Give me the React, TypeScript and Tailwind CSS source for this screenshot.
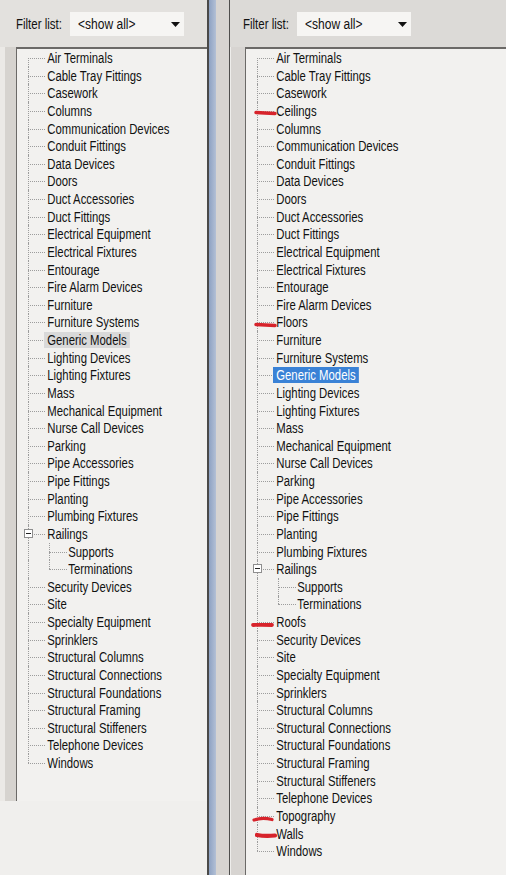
import React from "react";

type Item = { label: string; children?: string[] };

type Mark = { cls: string; d: string; w: number };

const leftItems: Item[] = [
  { label: "Air Terminals" },
  { label: "Cable Tray Fittings" },
  { label: "Casework" },
  { label: "Columns" },
  { label: "Communication Devices" },
  { label: "Conduit Fittings" },
  { label: "Data Devices" },
  { label: "Doors" },
  { label: "Duct Accessories" },
  { label: "Duct Fittings" },
  { label: "Electrical Equipment" },
  { label: "Electrical Fixtures" },
  { label: "Entourage" },
  { label: "Fire Alarm Devices" },
  { label: "Furniture" },
  { label: "Furniture Systems" },
  { label: "Generic Models" },
  { label: "Lighting Devices" },
  { label: "Lighting Fixtures" },
  { label: "Mass" },
  { label: "Mechanical Equipment" },
  { label: "Nurse Call Devices" },
  { label: "Parking" },
  { label: "Pipe Accessories" },
  { label: "Pipe Fittings" },
  { label: "Planting" },
  { label: "Plumbing Fixtures" },
  { label: "Railings", children: ["Supports", "Terminations"] },
  { label: "Security Devices" },
  { label: "Site" },
  { label: "Specialty Equipment" },
  { label: "Sprinklers" },
  { label: "Structural Columns" },
  { label: "Structural Connections" },
  { label: "Structural Foundations" },
  { label: "Structural Framing" },
  { label: "Structural Stiffeners" },
  { label: "Telephone Devices" },
  { label: "Windows" },
];

// right list = left list plus the categories that were added
const added: Record<string, string> = {
  Ceilings: "Columns",
  Floors: "Furniture",
  Roofs: "Security Devices",
  Topography: "Windows",
  Walls: "Windows",
};

const rightItems: Item[] = [];
leftItems.forEach((it) => {
  Object.keys(added).forEach((k) => {
    if (added[k] === it.label) rightItems.push({ label: k });
  });
  rightItems.push(it);
});

// red pen strokes drawn on the screenshot
const marks: Record<string, Mark> = {
  Ceilings: { cls: "left-[8px] top-[7px]", d: "M2 3.5 Q10 4 21 4.5", w: 3.5 },
  Floors: { cls: "left-[8px] top-[7px]", d: "M2 3.5 Q11 4 21 4.5", w: 3.5 },
  Roofs: { cls: "left-[5px] top-[8px]", d: "M2 4 Q10 3.6 21 4", w: 3.8 },
  Topography: { cls: "left-[6px] top-[8px]", d: "M2 5 Q10 2 20 4.5", w: 3.2 },
  Walls: { cls: "left-[9px] top-[6px]", d: "M2 4 Q10 5.5 20 4.5", w: 4.2 },
};

type Row = {
  label: string;
  level: number;
  first: boolean;
  last: boolean;
  expand: boolean;
  childLast: boolean;
};

function flatten(items: Item[]): Row[] {
  const rows: Row[] = [];
  items.forEach((it, i) => {
    rows.push({
      label: it.label,
      level: 0,
      first: i === 0,
      last: i === items.length - 1,
      expand: !!it.children,
      childLast: false,
    });
    (it.children || []).forEach((c, j) => {
      rows.push({
        label: c,
        level: 1,
        first: false,
        last: false,
        expand: false,
        childLast: j === it.children!.length - 1,
      });
    });
  });
  return rows;
}

const font = "font-['Liberation_Sans',Arial,sans-serif]";

function TreeRow({ row, selected }: { row: Row; selected?: "blue" | "gray" }) {
  const mark = marks[row.label];
  let vClass = "top-0 bottom-0";
  if (row.first) vClass = "top-1/2 bottom-0";
  if (row.last) vClass = "top-0 bottom-1/2";

  let hl = "text-[#111]";
  if (selected === "blue") hl = "bg-[#3a82d6] text-white";
  if (selected === "gray") hl = "bg-[#d9d9d9] text-[#111]";

  return (
    <div className="relative h-[17.625px] flex items-center whitespace-nowrap">
      <span className={`absolute left-[11px] w-0 border-l border-dotted border-[#9c9c9c] ${vClass}`} />
      {row.level === 0 ? (
        <span className="absolute left-[11px] top-1/2 w-[17px] border-t border-dotted border-[#9c9c9c]" />
      ) : (
        <>
          <span
            className={`absolute left-[32px] w-0 border-l border-dotted border-[#9c9c9c] ${
              row.childLast ? "top-0 bottom-1/2" : "top-0 bottom-0"
            }`}
          />
          <span className="absolute left-[32px] top-1/2 w-[18px] border-t border-dotted border-[#9c9c9c]" />
        </>
      )}
      {row.expand && (
        <span className="absolute left-[7px] top-[4px] w-[9px] h-[9px] border border-[#8e8e8e] bg-white flex items-center justify-center">
          <span className="w-[5px] h-px bg-[#222]" />
        </span>
      )}
      {mark && (
        <svg className={`absolute ${mark.cls}`} width="24" height="9" viewBox="0 0 24 9">
          <path d={mark.d} stroke="#d7232b" strokeWidth={mark.w} strokeLinecap="round" fill="none" />
        </svg>
      )}
      <span className={row.level === 0 ? "ml-[27px]" : "ml-[48px]"}>
        <span
          className={`inline-block origin-left scale-x-[0.81] px-[4px] h-[16px] leading-[16px] text-[14px] ${hl}`}
        >
          {row.label}
        </span>
      </span>
    </div>
  );
}

function Tree({ items, selected, tone }: { items: Item[]; selected: string; tone: "blue" | "gray" }) {
  const rows = flatten(items);
  return (
    <div className="pt-[0.2px]">
      {rows.map((r) => (
        <TreeRow key={r.label} row={r} selected={r.label === selected ? tone : undefined} />
      ))}
    </div>
  );
}

function FilterBar({ pad }: { pad: string }) {
  return (
    <div className={`h-[47px] flex items-center ${pad}`}>
      <span className="w-[54px] shrink-0 whitespace-nowrap">
        <span className="inline-block origin-left scale-x-[0.82] text-[14px] leading-[16px] text-[#111] whitespace-nowrap">
          Filter list:
        </span>
      </span>
      <div className="w-[114px] shrink-0 h-[24px] bg-[#f6f5f3] flex items-center justify-between pl-[8px] pr-[4px] mt-[1px]">
        <span className="inline-block origin-left scale-x-[0.86] text-[14px] leading-[16px] text-[#111] whitespace-nowrap">
          &lt;show all&gt;
        </span>
        <svg width="9" height="5" viewBox="0 0 9 5">
          <path d="M0 0 H9 L4.5 5 Z" fill="#111" />
        </svg>
      </div>
    </div>
  );
}

export default function App() {
  return (
    <div className={`flex w-[506px] h-[875px] overflow-hidden bg-[#f0efed] ${font}`}>
      {/* left dialog, before */}
      <div className="w-[207px] shrink-0 flex flex-col">
        <div className="bg-[#e3e1de]">
          <FilterBar pad="pl-[16px]" />
        </div>
        <div className="flex h-[754px]">
          <div className="w-[5px] bg-[#ebe9e6]" />
          <div className="w-[11px] bg-[#d6d3cf]" />
          <div className="flex-1 border-l border-t-2 border-[#6b6967] bg-[#f2f1ef] overflow-hidden">
            <Tree items={leftItems} selected="Generic Models" tone="gray" />
          </div>
        </div>
        <div className="flex-1 bg-[#f0efed]" />
      </div>

      {/* window frame between the two screenshots */}
      <div className="w-[2px] shrink-0 bg-[#4a4948]" />
      <div className="w-[7px] shrink-0 bg-gradient-to-r from-[#8ea2c3] to-[#b3c0d5]" />
      <div className="w-[13px] shrink-0 bg-[#d7d4d1]" />
      <div className="w-px shrink-0 bg-[#4f4e4d]" />

      {/* right dialog, after */}
      <div className="flex-1 flex flex-col min-w-0">
        <div className="bg-[#dcdad7]">
          <FilterBar pad="pl-[13px]" />
        </div>
        <div className="flex flex-1 min-h-0">
          <div className="w-px bg-[#eeedeb]" />
          <div className="w-[14px] bg-[#d7d4d1]" />
          <div className="flex-1 border-l border-t-2 border-[#6b6967] bg-[#f2f1ef] overflow-hidden">
            <Tree items={rightItems} selected="Generic Models" tone="blue" />
          </div>
        </div>
      </div>
    </div>
  );
}
